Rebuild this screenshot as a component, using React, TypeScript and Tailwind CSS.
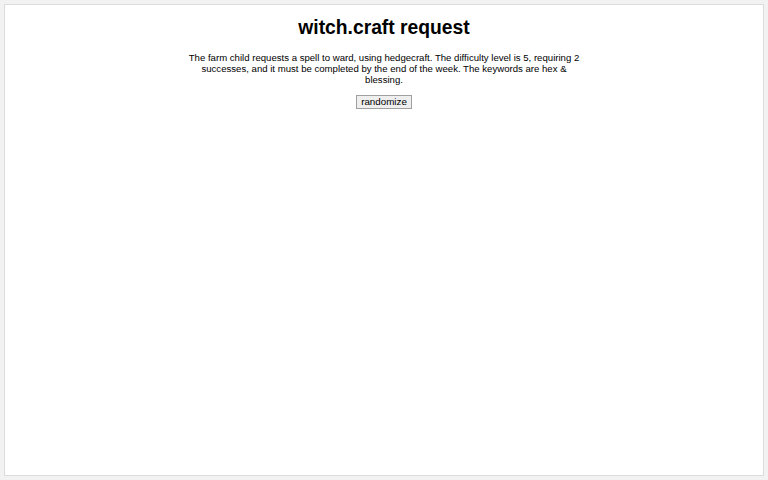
export default function App() {
  return (
    <div className="h-[480px] w-[768px] bg-[#f2f2f2] p-1 font-['Liberation_Sans',Arial,sans-serif] text-black">
      <div className="flex h-full flex-col items-center border border-[#dcdcdc] bg-white">
        <h1 className="mt-[11px] text-[19.3px] font-bold leading-[24px]">witch.craft request</h1>
        <p className="mt-[12px] w-[392px] text-center text-[9.6px] leading-[11px]">
          The farm child requests a spell to ward, using hedgecraft. The difficulty level is 5, requiring 2
          successes, and it must be completed by the end of the week. The keywords are hex &amp; blessing.
        </p>
        <button className="mt-[10px] border border-[#a0a0a0] bg-[#efefef] px-[4px] text-[9.8px] leading-[12px]">
          randomize
        </button>
      </div>
    </div>
  );
}
